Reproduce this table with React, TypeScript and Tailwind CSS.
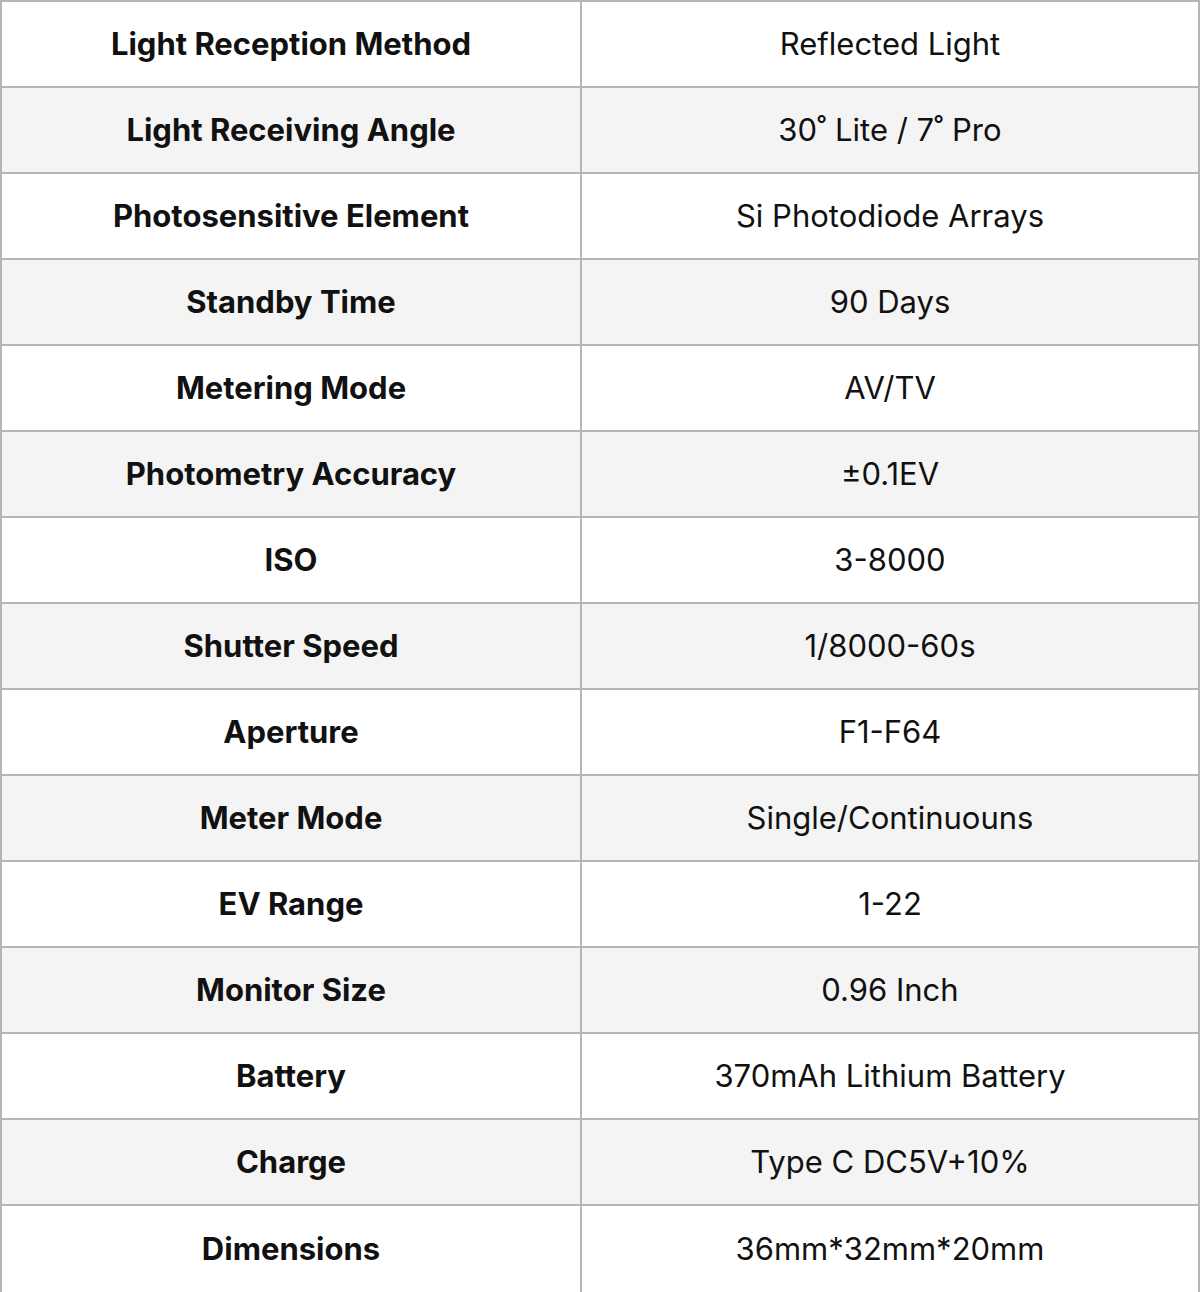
const specs: [string, string][] = [
  ["Light Reception Method", "Reflected Light"],
  ["Light Receiving Angle", "30˚ Lite / 7˚ Pro"],
  ["Photosensitive Element", "Si Photodiode Arrays"],
  ["Standby Time", "90 Days"],
  ["Metering Mode", "AV/TV"],
  ["Photometry Accuracy", "±0.1EV"],
  ["ISO", "3-8000"],
  ["Shutter Speed", "1/8000-60s"],
  ["Aperture", "F1-F64"],
  ["Meter Mode", "Single/Continuouns"],
  ["EV Range", "1-22"],
  ["Monitor Size", "0.96 Inch"],
  ["Battery", "370mAh Lithium Battery"],
  ["Charge", "Type C DC5V+10%"],
  ["Dimensions", "36mm*32mm*20mm"],
];

export default function App() {
  return (
    <div className="w-[1200px] bg-white font-['Inter',sans-serif] text-[#111]">
      <div className="flex flex-col border-2 border-[#b5b5b5]">
        {specs.map(([label, value], i) => (
          <div
            key={label}
            className={`flex h-[86px] ${i < specs.length - 1 ? "border-b-2 border-[#b5b5b5]" : ""} ${
              i % 2 === 1 ? "bg-[#f4f4f4]" : "bg-white"
            }`}
          >
            <div className="flex w-[580px] items-center justify-center border-r-2 border-[#b5b5b5] text-[31px] font-bold">
              {label}
            </div>
            <div className="flex flex-1 items-center justify-center text-[31px]">{value}</div>
          </div>
        ))}
      </div>
    </div>
  );
}
